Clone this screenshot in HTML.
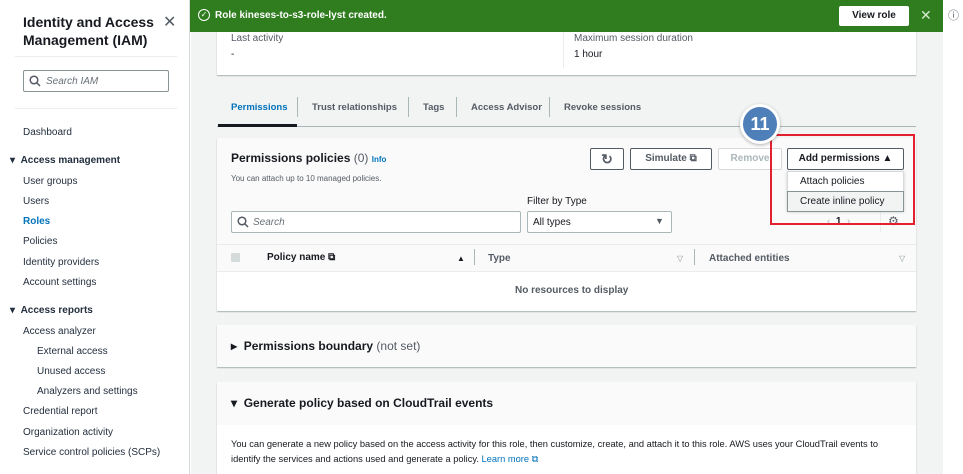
<!DOCTYPE html>
<html><head><meta charset="utf-8"><style>
*{box-sizing:border-box;margin:0;padding:0}
html,body{width:963px;height:474px;overflow:hidden}
body{background:#fff;font-family:"Liberation Sans",sans-serif;color:#16191f;position:relative}
.a{position:absolute;white-space:nowrap}
.side{position:absolute;left:0;top:0;width:190px;height:474px;background:#fff;border-right:1px solid #d5dbdb}
.main{position:absolute;left:191px;top:0;width:752px;height:474px;background:#f2f3f3;overflow:hidden}
.nav{font-size:10px;color:#232f3e}
.b{font-weight:bold}
.panel{position:absolute;background:#fff;box-shadow:0 1px 1px rgba(0,28,36,.3);}
.btn{position:absolute;border:1px solid #545b64;background:#fff;font-size:10px;font-weight:bold;color:#545b64;text-align:center;border-radius:2px}
.s{font-size:10px}
.t{font-size:9.5px}
</style></head><body>
<div style="position:absolute;left:0;top:0;width:2px;height:474px;background:#222"></div>
<div class="side">
<div class="a b" style="left:23px;top:13px;font-size:14px;line-height:18px">Identity and Access<br>Management (IAM)</div>
<div class="a" style="left:163px;top:12px;font-size:16px;color:#545b64">✕</div>
<div style="position:absolute;left:15px;top:56px;width:162px;border-top:1px solid #eaeded"></div>
<div style="position:absolute;left:23px;top:70px;width:146px;height:22px;border:1px solid #879596;border-radius:2px"></div>
<svg class="a" style="left:29px;top:75px" width="12" height="12"><circle cx="5" cy="5" r="3.8" fill="none" stroke="#545b64" stroke-width="1.5"/><line x1="8" y1="8" x2="11" y2="11" stroke="#545b64" stroke-width="1.5"/></svg>
<div class="a" style="left:46px;top:76px;font-size:10px;font-style:italic;color:#687078">Search IAM</div>
<div style="position:absolute;left:15px;top:108px;width:162px;border-top:1px solid #eaeded"></div>
<div class="a nav" style="left:23px;top:127px">Dashboard</div>
<div class="a nav b" style="left:10px;top:155px">▾ &nbsp;Access management</div>
<div class="a nav" style="left:23px;top:176px">User groups</div>
<div class="a nav" style="left:23px;top:196px">Users</div>
<div class="a nav b" style="left:23px;top:216px;color:#0073bb">Roles</div>
<div class="a nav" style="left:23px;top:236px">Policies</div>
<div class="a nav" style="left:23px;top:257px">Identity providers</div>
<div class="a nav" style="left:23px;top:277px">Account settings</div>
<div class="a nav b" style="left:10px;top:305px">▾ &nbsp;Access reports</div>
<div class="a nav" style="left:23px;top:326px">Access analyzer</div>
<div class="a nav" style="left:37px;top:346px">External access</div>
<div class="a nav" style="left:37px;top:366px">Unused access</div>
<div class="a nav" style="left:37px;top:386px">Analyzers and settings</div>
<div class="a nav" style="left:23px;top:406px">Credential report</div>
<div class="a nav" style="left:23px;top:427px">Organization activity</div>
<div class="a nav" style="left:23px;top:447px">Service control policies (SCPs)</div>
</div>
<div class="main">
<div class="panel" style="left:26px;top:20px;width:699px;height:55px"></div>
<div style="position:absolute;left:372px;top:30px;height:38px;border-left:1px solid #eaeded"></div>
<div class="a s" style="left:40px;top:33px;color:#545b64">Last activity</div>
<div class="a s" style="left:40px;top:49px">-</div>
<div class="a s" style="left:383px;top:33px;color:#545b64">Maximum session duration</div>
<div class="a s" style="left:383px;top:49px">1 hour</div>
<div style="position:absolute;left:26px;top:126px;width:699px;border-top:1px solid #aab7b8"></div>
<div style="position:absolute;left:27px;top:124px;width:79px;height:3px;background:#16191f"></div>
<div class="a t b" style="left:40px;top:102px;color:#0073bb">Permissions</div>
<div style="position:absolute;left:106px;top:97px;height:20px;border-left:1px solid #aab7b8"></div>
<div class="a t b" style="left:121px;top:102px;color:#545b64">Trust relationships</div>
<div style="position:absolute;left:217px;top:97px;height:20px;border-left:1px solid #aab7b8"></div>
<div class="a t b" style="left:232px;top:102px;color:#545b64">Tags</div>
<div style="position:absolute;left:265px;top:97px;height:20px;border-left:1px solid #aab7b8"></div>
<div class="a t b" style="left:280px;top:102px;color:#545b64">Access Advisor</div>
<div style="position:absolute;left:358px;top:97px;height:20px;border-left:1px solid #aab7b8"></div>
<div class="a t b" style="left:373px;top:102px;color:#545b64">Revoke sessions</div>
<div class="panel" style="left:26px;top:138px;width:699px;height:173px;background:#fafafa"></div>
<div style="position:absolute;left:26px;top:272px;width:699px;height:39px;background:#fff"></div>
<div style="position:absolute;left:26px;top:244px;width:699px;height:28px;border-top:1px solid #eaeded;border-bottom:1px solid #eaeded"></div>
<div class="a b" style="left:40px;top:151px;font-size:12px">Permissions policies <span style="font-weight:normal;color:#545b64">(0)</span> <span style="font-size:8px;color:#0073bb">Info</span></div>
<div class="a" style="left:40px;top:174px;font-size:8px;color:#545b64">You can attach up to 10 managed policies.</div>
<div class="btn" style="left:399px;top:148px;width:34px;height:22px;line-height:20px;font-size:14px">↻</div>
<div class="btn" style="left:439px;top:148px;width:82px;height:22px;line-height:20px">Simulate ⧉</div>
<div class="btn" style="left:527px;top:148px;width:64px;height:22px;line-height:20px;border-color:#d5dbdb;color:#aab7b8">Remove</div>
<div class="btn" style="left:596px;top:148px;width:117px;height:22px;line-height:20px;color:#16191f">Add permissions ▲</div>
<div class="a s" style="left:336px;top:196px">Filter by Type</div>
<div style="position:absolute;left:40px;top:211px;width:290px;height:22px;border:1px solid #aab7b8;background:#fff;border-radius:2px"></div>
<svg class="a" style="left:46px;top:216px" width="12" height="12"><circle cx="5" cy="5" r="3.8" fill="none" stroke="#545b64" stroke-width="1.5"/><line x1="8" y1="8" x2="11" y2="11" stroke="#545b64" stroke-width="1.5"/></svg>
<div class="a s" style="left:62px;top:217px;font-style:italic;color:#687078">Search</div>
<div style="position:absolute;left:336px;top:211px;width:145px;height:22px;border:1px solid #aab7b8;background:#fff;border-radius:2px"></div>
<div class="a s" style="left:342px;top:217px">All types</div>
<div class="a" style="left:464px;top:216px;font-size:9px;color:#545b64">▼</div>
<div class="a s" style="left:636px;top:216px;color:#aab7b8">‹ &nbsp;<b style="color:#16191f">1</b>&nbsp; ›</div>
<div style="position:absolute;left:689px;top:212px;height:20px;border-left:1px solid #eaeded"></div>
<div class="a" style="left:697px;top:214px;font-size:12px;color:#545b64">⚙</div>
<div style="position:absolute;left:40px;top:253px;width:9px;height:9px;background:#d5dbdb;border-radius:1px"></div>
<div class="a s b" style="left:76px;top:252px">Policy name ⧉</div>
<div class="a" style="left:266px;top:254px;font-size:8px">▲</div>
<div style="position:absolute;left:283px;top:249px;height:16px;border-left:1px solid #aab7b8"></div>
<div class="a s b" style="left:297px;top:253px;color:#545b64">Type</div>
<div class="a" style="left:486px;top:254px;font-size:8px;color:#879596">▽</div>
<div style="position:absolute;left:503px;top:249px;height:16px;border-left:1px solid #aab7b8"></div>
<div class="a s b" style="left:518px;top:253px;color:#545b64">Attached entities</div>
<div class="a" style="left:708px;top:254px;font-size:8px;color:#879596">▽</div>
<div class="a s b" style="left:324px;top:285px;color:#545b64">No resources to display</div>
<div style="position:absolute;left:596px;top:171px;width:117px;height:40px;background:#fff;border:1px solid #d5dbdb;box-shadow:0 1px 3px rgba(0,0,0,.2)"></div>
<div class="a s" style="left:609px;top:176px">Attach policies</div>
<div style="position:absolute;left:596px;top:191px;width:117px;height:21px;background:#f2f3f3;border:1px solid #879596"></div>
<div class="a s" style="left:609px;top:196px">Create inline policy</div>
<div style="position:absolute;left:579px;top:134px;width:145px;height:91px;border:2px solid #e3202d"></div>
<div style="position:absolute;left:549px;top:104px;width:40px;height:40px;border-radius:50%;background:#4f7fb8;border:3px solid #fff;box-shadow:0 1px 3px rgba(0,0,0,.3);color:#fff;font-weight:bold;font-size:18px;text-align:center;line-height:34px">11</div>
<div class="panel" style="left:26px;top:325px;width:699px;height:42px;background:#fafafa"></div>
<div class="a b" style="left:40px;top:339px;font-size:12px">▸ &nbsp;Permissions boundary <span style="font-weight:normal;color:#545b64">(not set)</span></div>
<div class="panel" style="left:26px;top:382px;width:699px;height:100px;background:#fff"></div>
<div style="position:absolute;left:26px;top:382px;width:699px;height:43px;background:#fafafa"></div>
<div class="a b" style="left:40px;top:396px;font-size:12px">▾ &nbsp;Generate policy based on CloudTrail events</div>
<div class="a" style="left:40px;top:437px;line-height:15px;font-size:9.3px">You can generate a new policy based on the access activity for this role, then customize, create, and attach it to this role. AWS uses your CloudTrail events to<br>identify the services and actions used and generate a policy. <span style="color:#0073bb">Learn more ⧉</span></div>
</div>
<div style="position:absolute;left:190px;top:0;width:753px;height:32px;background:#2f7d1f"></div>
<div class="a" style="left:198px;top:9px;width:12px;height:12px;border:1.5px solid #fff;border-radius:50%;color:#fff;font-size:8px;line-height:9px;text-align:center">✓</div>
<div class="a b" style="left:215px;top:10px;font-size:10px;color:#fff">Role kineses-to-s3-role-lyst created.</div>
<div class="a b" style="left:839px;top:6px;width:70px;height:20px;background:#fff;border-radius:2px;font-size:10px;color:#16191f;text-align:center;line-height:20px">View role</div>
<div class="a" style="left:920px;top:7px;font-size:14px;color:#d5ead0">✕</div>
<div class="a" style="left:948px;top:7px;font-size:11px;color:#545b64">ⓘ</div>
</body></html>
